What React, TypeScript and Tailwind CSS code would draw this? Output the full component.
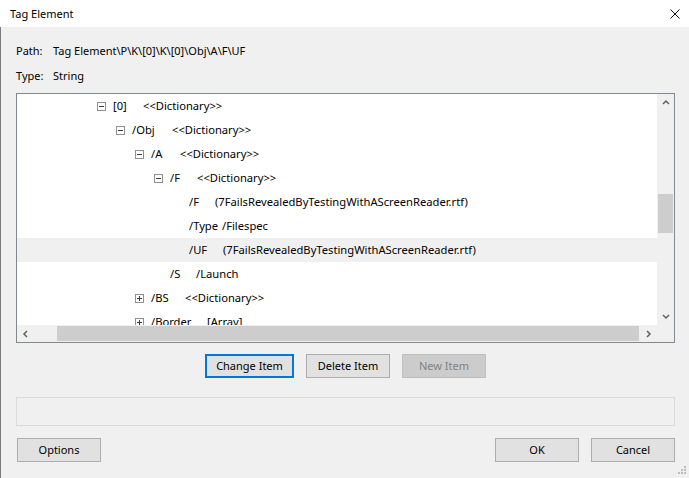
import React from "react";

type Row = {
  pad: string;
  kw: string;
  k: string;
  v: string;
  exp?: "minus" | "plus";
  hl?: boolean;
};

const rows: Row[] = [
  { pad: "pl-[80px]", exp: "minus", kw: "w-[30px]", k: "[0]", v: "<<Dictionary>>" },
  { pad: "pl-[99px]", exp: "minus", kw: "w-[40px]", k: "/Obj", v: "<<Dictionary>>" },
  { pad: "pl-[118px]", exp: "minus", kw: "w-[29px]", k: "/A", v: "<<Dictionary>>" },
  { pad: "pl-[137px]", exp: "minus", kw: "w-[27px]", k: "/F", v: "<<Dictionary>>" },
  { pad: "pl-[172px]", kw: "w-[26px]", k: "/F", v: "(7FailsRevealedByTestingWithAScreenReader.rtf)" },
  { pad: "pl-[172px]", kw: "w-[33px]", k: "/Type", v: "/Filespec" },
  { pad: "pl-[172px]", kw: "w-[34px]", k: "/UF", v: "(7FailsRevealedByTestingWithAScreenReader.rtf)", hl: true },
  { pad: "pl-[153px]", kw: "w-[26px]", k: "/S", v: "/Launch" },
  { pad: "pl-[118px]", exp: "plus", kw: "w-[34px]", k: "/BS", v: "<<Dictionary>>" },
  { pad: "pl-[118px]", exp: "plus", kw: "w-[56px]", k: "/Border", v: "[Array]" },
];

function Expander({ kind }: { kind: "minus" | "plus" }) {
  return (
    <svg width="9" height="9" viewBox="0 0 9 9" className="shrink-0 mr-[7px]">
      <rect x="0.5" y="0.5" width="8" height="8" fill="#fff" stroke="#8e8f8f" />
      <line x1="2" y1="4.5" x2="7" y2="4.5" stroke="#3c3c3c" />
      {kind === "plus" && <line x1="4.5" y1="2" x2="4.5" y2="7" stroke="#3c3c3c" />}
    </svg>
  );
}

function Chevron({ dir }: { dir: "up" | "down" | "left" | "right" }) {
  const d =
    dir === "up"
      ? "M1 5 L4 2 L7 5"
      : dir === "down"
      ? "M1 2 L4 5 L7 2"
      : dir === "left"
      ? "M5 1 L2 4 L5 7"
      : "M2 1 L5 4 L2 7";
  return (
    <svg width="8" height="8" viewBox="0 0 8 8">
      <path d={d} fill="none" stroke="#606060" strokeWidth="1.5" />
    </svg>
  );
}

function Btn({
  label,
  w,
  focus,
  disabled,
}: {
  label: string;
  w: string;
  focus?: boolean;
  disabled?: boolean;
}) {
  const base = "h-[24px] flex items-center justify-center shrink-0 text-[11px] " + w + " ";
  const cls = focus
    ? "border-2 border-[#0078d7] bg-[#e1e1e1] text-black"
    : disabled
    ? "border border-[#bfbfbf] bg-[#cccccc] text-[#838383]"
    : "border border-[#adadad] bg-[#e1e1e1] text-black";
  return <div className={base + cls}>{label}</div>;
}

export default function App() {
  return (
    <div className="w-[689px] h-[478px] overflow-hidden relative bg-[#f0f0f0] font-['Noto_Sans',sans-serif] text-[11px] text-black leading-[16px]">
      {/* Title bar */}
      <div className="h-[27px] bg-white flex items-center justify-between pl-[10px] pr-[9px]">
        <span className="text-[11px]">Tag Element</span>
        <svg width="10" height="10" viewBox="0 0 10 10">
          <path d="M0.5 0.5 L9.5 9.5 M9.5 0.5 L0.5 9.5" stroke="#111" strokeWidth="1" />
        </svg>
      </div>

      {/* Body */}
      <div className="h-[451px] border-l border-[#7b7b7b] flex flex-col pl-[15px] pt-[16px]">
        <div className="flex h-[16px] items-center">
          <span className="w-[37px] shrink-0">Path:</span>
          <span>Tag Element\P\K\[0]\K\[0]\Obj\A\F\UF</span>
        </div>
        <div className="flex h-[16px] items-center mt-[9px]">
          <span className="w-[37px] shrink-0">Type:</span>
          <span>String</span>
        </div>

        {/* Tree box */}
        <div className="mt-[9px] w-[659px] h-[250px] border border-[#828790] bg-white flex flex-col">
          <div className="flex h-[231px]">
            <div className="w-[640px] h-[231px] overflow-hidden flex flex-col text-[11.2px]">
              {rows.map((r, i) => (
                <div
                  key={i}
                  className={
                    "h-[24px] shrink-0 flex items-center whitespace-nowrap " +
                    r.pad +
                    (r.hl ? " bg-[#f0f0f0]" : "")
                  }
                >
                  {r.exp && <Expander kind={r.exp} />}
                  <span className={"shrink-0 " + r.kw}>{r.k}</span>
                  <span>{r.v}</span>
                </div>
              ))}
            </div>
            {/* vertical scrollbar */}
            <div className="w-[17px] h-[231px] bg-[#f0f0f0] flex flex-col items-center">
              <div className="h-[17px] w-[17px] flex items-center justify-center">
                <Chevron dir="up" />
              </div>
              <div className="h-[83px]" />
              <div className="h-[39px] w-[15px] bg-[#cdcdcd]" />
              <div className="flex-1" />
              <div className="h-[17px] w-[17px] flex items-center justify-center">
                <Chevron dir="down" />
              </div>
            </div>
          </div>
          {/* horizontal scrollbar */}
          <div className="flex h-[17px]">
            <div className="w-[640px] h-[17px] bg-[#f0f0f0] flex items-center">
              <div className="w-[17px] h-[17px] flex items-center justify-center shrink-0">
                <Chevron dir="left" />
              </div>
              <div className="w-[23px] shrink-0" />
              <div className="w-[582px] h-[15px] bg-[#cdcdcd] shrink-0" />
              <div className="flex-1" />
              <div className="w-[17px] h-[17px] flex items-center justify-center shrink-0">
                <Chevron dir="right" />
              </div>
            </div>
            <div className="w-[17px] h-[17px] bg-[#f0f0f0]" />
          </div>
        </div>

        {/* Item buttons */}
        <div className="mt-[11px] w-[659px] flex justify-center gap-[12px] h-[24px]">
          <Btn label="Change Item" w="w-[89px]" focus />
          <Btn label="Delete Item" w="w-[84px]" />
          <Btn label="New Item" w="w-[84px]" disabled />
        </div>

        {/* Status box */}
        <div className="mt-[19px] w-[659px] h-[29px] border border-[#dadada] bg-[#f0f0f0]" />

        {/* Bottom buttons */}
        <div className="mt-[12px] w-[659px] flex items-center pl-px">
          <Btn label="Options" w="w-[84px]" />
          <div className="flex-1" />
          <div className="flex gap-[12px]">
            <Btn label="OK" w="w-[84px]" />
            <Btn label="Cancel" w="w-[84px]" />
          </div>
        </div>
      </div>

      {/* resize grip */}
      <svg width="9" height="9" viewBox="0 0 9 9" className="absolute right-[2px] bottom-[3px]">
        <rect x="6" y="0" width="2" height="2" fill="#bcbcbc" />
        <rect x="3" y="3" width="2" height="2" fill="#bcbcbc" />
        <rect x="6" y="3" width="2" height="2" fill="#bcbcbc" />
        <rect x="0" y="6" width="2" height="2" fill="#bcbcbc" />
        <rect x="3" y="6" width="2" height="2" fill="#bcbcbc" />
        <rect x="6" y="6" width="2" height="2" fill="#bcbcbc" />
      </svg>
    </div>
  );
}
